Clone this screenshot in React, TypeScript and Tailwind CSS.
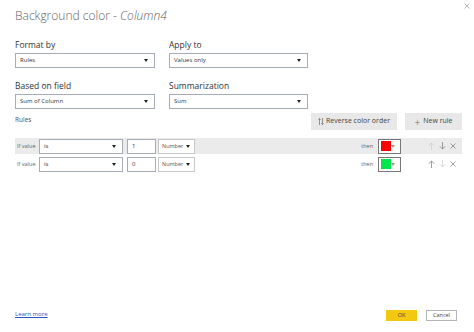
import React from 'react';

const Caret: React.FC<{ className?: string }> = ({ className = 'fill-[#222]' }) => (
  <svg width="4" height="3" viewBox="0 0 4 3" className={className}>
    <path d="M0 0h4L2 3z" />
  </svg>
);

const Select: React.FC<{ value: string; className?: string }> = ({ value, className = '' }) => (
  <div className={`flex items-center justify-between bg-white border border-[#a7adb8] pl-[4px] pr-[6px] text-[6px] text-[#333] ${className}`}>
    <span>{value}</span>
    <Caret />
  </div>
);

const Arrow: React.FC<{ dir: 'up' | 'down'; on: boolean }> = ({ dir, on }) => (
  <svg width="7" height="8" viewBox="0 0 7 8" fill="none" strokeWidth="0.7" className={on ? 'stroke-[#777]' : 'stroke-[#cccccc]'}>
    {dir === 'up' ? <path d="M3.5 8V1M0.8 3.7L3.5 1l2.7 2.7" /> : <path d="M3.5 0v7M0.8 4.3L3.5 7l2.7-2.7" />}
  </svg>
);

const Cross: React.FC<{ className?: string }> = ({ className = 'stroke-[#777]' }) => (
  <svg width="6" height="6" viewBox="0 0 6 6" fill="none" strokeWidth="0.7" className={className}>
    <path d="M0.5 0.5l5 5M5.5 0.5l-5 5" />
  </svg>
);

type Rule = { value: string; color: string; up: boolean; down: boolean; shaded: boolean };

const rules: Rule[] = [
  { value: '1', color: 'bg-[#ff0000]', up: false, down: true, shaded: true },
  { value: '0', color: 'bg-[#00e64d]', up: true, down: false, shaded: false },
];

const RuleRow: React.FC<{ rule: Rule }> = ({ rule }) => (
  <div className={`flex items-center h-[16px] pl-[2px] pr-[6px] ${rule.shaded ? 'bg-[#ebebeb]' : ''}`}>
    <span className="w-[22px] text-[5.5px] text-[#666]">If value</span>
    <Select value="is" className="w-[84px] h-[15px]" />
    <div className="ml-[4px] w-[29px] h-[15px] border border-[#a7adb8] bg-white pl-[4px] flex items-center text-[6px] text-[#333]">
      {rule.value}
    </div>
    <div className="ml-[2px] w-[37px] h-[15px] border border-[#c8c8c8] bg-white pl-[3px] pr-[4px] flex items-center justify-between text-[5.5px] text-[#555]">
      <span>Number</span>
      <Caret />
    </div>
    <div className="flex-1" />
    <span className="text-[5.5px] text-[#666]">then</span>
    <div className="ml-[5px] w-[23px] h-[15px] border border-[#777] bg-white flex items-center pl-[2px] pr-[5px] justify-between">
      <div className={`w-[10px] h-[10px] ${rule.color}`} />
      <Caret className="fill-[#999]" />
    </div>
    <div className="ml-[27px] flex items-center gap-[4px]">
      <Arrow dir="up" on={rule.up} />
      <Arrow dir="down" on={rule.down} />
      <Cross />
    </div>
  </div>
);

const App: React.FC = () => {
  return (
    <div className="relative w-[474px] h-[332px] bg-white flex flex-col pl-[15px] pr-[12px] text-[#333]" style={{ fontFamily: '"Open Sans", "Liberation Sans", sans-serif' }}>
      <div className="absolute top-[3px] right-[4px]">
        <Cross className="stroke-[#999]" />
      </div>

      <h1 className="mt-[6px] h-[20px] leading-[20px] text-[12px] font-light text-[#666]">
        Background color - <span className="italic">Column4</span>
      </h1>

      <div className="grid grid-cols-[140px_139px] gap-x-[14px]">
        <div>
          <p className="mt-[12px] text-[8.5px] leading-[14px] text-[#333]">Format by</p>
          <Select value="Rules" className="mt-[1px] h-[15px]" />
        </div>
        <div>
          <p className="mt-[12px] text-[8.5px] leading-[14px] text-[#333]">Apply to</p>
          <Select value="Values only" className="mt-[1px] h-[15px]" />
        </div>
        <div>
          <p className="mt-[11px] text-[8.5px] leading-[14px] text-[#333]">Based on field</p>
          <Select value="Sum of Column" className="mt-[1px] h-[15px]" />
        </div>
        <div>
          <p className="mt-[11px] text-[8.5px] leading-[14px] text-[#333]">Summarization</p>
          <Select value="Sum" className="mt-[1px] h-[15px]" />
        </div>
      </div>

      <div className="mt-[4px] flex items-start justify-between">
        <span className="mt-[2px] text-[6.5px] text-[#555]">Rules</span>
        <div className="flex gap-[8px]">
          <button className="h-[17px] w-[86px] bg-[#e8e8e8] text-[7px] text-[#444] flex items-center justify-center gap-[2px]">
            <svg width="6" height="7" viewBox="0 0 6 7" fill="none" strokeWidth="0.6" className="stroke-[#555]">
              <path d="M1.5 7V0.5M0.3 1.7L1.5 0.5l1.2 1.2M4.5 0v6.5M3.3 5.3l1.2 1.2 1.2-1.2" />
            </svg>
            Reverse color order
          </button>
          <button className="h-[17px] w-[57px] bg-[#e8e8e8] text-[7px] text-[#444] flex items-center justify-center gap-[3px]">
            <span className="text-[10px] font-light leading-none text-[#666]">+</span>
            New rule
          </button>
        </div>
      </div>

      <div className="mt-[8px] flex flex-col gap-[2px]">
        {rules.map((r, i) => (
          <RuleRow key={i} rule={r} />
        ))}
      </div>

      <div className="mt-auto mb-[11px] flex items-end justify-between">
        <a className="mb-[2px] text-[6px] text-[#2a55c6] underline">Learn more</a>
        <div className="flex gap-[9px] mr-[5px]">
          <button className="w-[31px] h-[11px] bg-[#f2c811] text-[5.5px] text-[#444] flex items-center justify-center">OK</button>
          <button className="w-[31px] h-[11px] bg-white border border-[#b5b5b5] text-[5.5px] text-[#444] flex items-center justify-center">Cancel</button>
        </div>
      </div>
    </div>
  );
};

export default App;
